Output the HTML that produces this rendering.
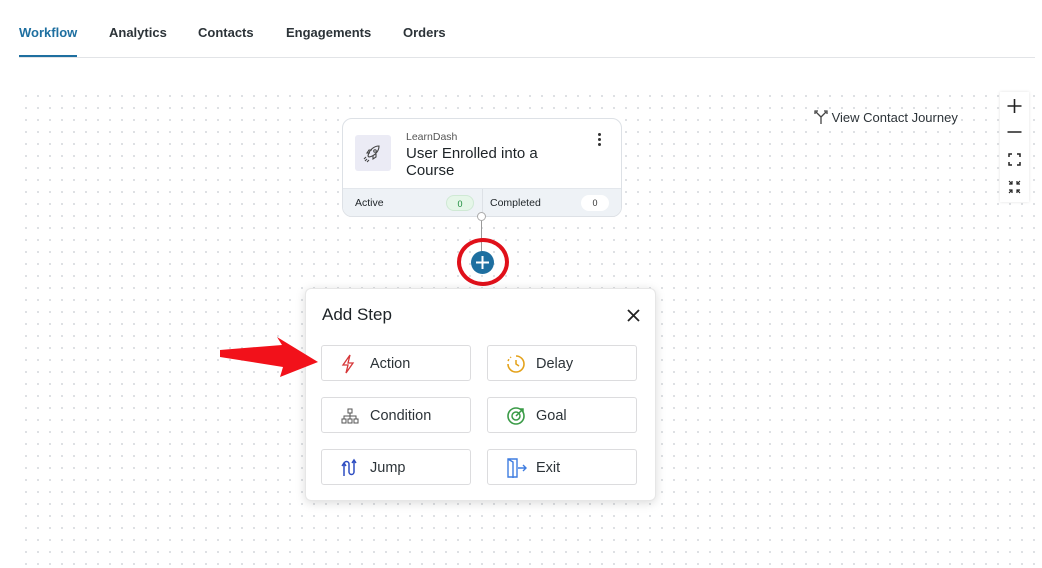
<!DOCTYPE html>
<html><head><style>
*{margin:0;padding:0;box-sizing:border-box}
body{width:1042px;height:568px;background:#fff;font-family:"Liberation Sans",sans-serif;position:relative;overflow:hidden;color:#1d2327}
.tabs{position:absolute;left:19px;top:0;width:1016px;height:58px;border-bottom:1px solid #e2e4e7}
.tab{position:absolute;top:25px;font-size:13px;font-weight:bold;color:#2c3338}
.grid{position:absolute;left:20px;top:90px;width:1015px;height:478px;background-image:radial-gradient(circle,#d5d8dc 0.8px,transparent 1.1px);background-size:12px 12px}
.card{position:absolute;left:342px;top:118px;width:280px;height:99px;border:1px solid #dde1e6;border-radius:10px;background:#fff;overflow:hidden}
.foot{position:absolute;left:0;bottom:0;width:100%;height:28px;background:#eef2f6;border-top:1px solid #e3e7ec;font-size:10.5px}
.pill{position:absolute;top:6px;width:28px;height:16px;border-radius:8px;font-size:9px;text-align:center;line-height:16px}
.pop{position:absolute;left:305px;top:288px;width:351px;height:213px;background:#fff;border-radius:6px;box-shadow:0 2px 10px rgba(0,0,0,.15);border:1px solid #e6e6e6}
.btn{position:absolute;width:150px;height:36px;border:1px solid #dcdcde;border-radius:3px;font-size:14.5px;color:#2c3338}
.btn svg{position:absolute;left:18px;top:8px}
.btn span{position:absolute;left:48px;top:10px}
</style></head><body>
<div class="tabs">
<div class="tab" style="left:0;color:#1e6fa0">Workflow</div>
<div style="position:absolute;left:0;top:55px;width:58px;height:2px;background:#1e6fa0"></div>
<div class="tab" style="left:90px">Analytics</div>
<div class="tab" style="left:179px">Contacts</div>
<div class="tab" style="left:267px">Engagements</div>
<div class="tab" style="left:384px">Orders</div>
</div>
<div class="grid"></div>
<div style="position:absolute;left:814px;top:109px;font-size:13px;color:#2c3338;background:#fff">
<svg width="14" height="16" viewBox="0 0 14 16" style="vertical-align:-3px"><path d="M7 15V8M7 8L2 3M7 8L12 3M1 5V2h3M10 2h3v3" stroke="#444" stroke-width="1.3" fill="none"/></svg> View Contact Journey</div>
<div style="position:absolute;left:1000px;top:92px;width:29px;height:110px;background:#fff;box-shadow:0 0 3px rgba(0,0,0,.12)">
<svg width="29" height="110" viewBox="0 0 29 110"><path d="M14.5 7v14M7.5 14h14M7.5 40h14" stroke="#222" stroke-width="1.6"/><path d="M9 65v-3h3M17 62h3v3M20 70v3h-3M12 73H9v-3" stroke="#222" stroke-width="1.5" fill="none"/><path d="M9 89l3 3M12 89v3H9M20 89l-3 3M17 89v3h3M9 101l3-3M9 98h3v3M20 101l-3-3M17 101v-3h3" stroke="#222" stroke-width="1.2" fill="none"/></svg></div>
<div class="card">
<div style="position:absolute;left:12px;top:16px;width:36px;height:36px;background:#ebebf5;border-radius:3px">
<svg width="36" height="36" viewBox="0 0 36 36"><path d="M13 21c1-6 6-10 11-10-0 5-4 10-10 11zM17 15l-3 0-2 3 3 0M21 19v3l-3 2 0-3M12 24l-2 2M14 25l-2 2M11 22l-2 2" stroke="#444" stroke-width="1.1" fill="none"/><circle cx="20" cy="16" r="1.3" stroke="#444" fill="none"/></svg></div>
<div style="position:absolute;left:63px;top:12px;font-size:10.5px;color:#555">LearnDash</div>
<div style="position:absolute;left:63px;top:26px;font-size:15px;line-height:17px;color:#1d2327">User Enrolled into a<br>Course</div>
<div style="position:absolute;left:255px;top:14px;width:3px"><div style="width:3px;height:3px;background:#333;border-radius:50%;margin-bottom:2px"></div><div style="width:3px;height:3px;background:#333;border-radius:50%;margin-bottom:2px"></div><div style="width:3px;height:3px;background:#333;border-radius:50%"></div></div>
<div class="foot">
<div style="position:absolute;left:12px;top:8px">Active</div>
<div class="pill" style="left:103px;background:#e5f6e8;color:#1a8b3a;border:1px solid #cfe9d4">0</div>
<div style="position:absolute;left:139px;top:0;width:1px;height:28px;background:#dde1e6"></div>
<div style="position:absolute;left:147px;top:8px">Completed</div>
<div class="pill" style="left:238px;background:#fff;color:#333">0</div>
</div></div>
<div style="position:absolute;left:481px;top:215px;width:1px;height:58px;background:#999"></div>
<div style="position:absolute;left:477px;top:212px;width:9px;height:9px;border:1px solid #aaa;border-radius:50%;background:#fff"></div>
<div style="position:absolute;left:457px;top:238px;width:52px;height:48px;border:4px solid #e0101a;border-radius:50%"></div>
<div style="position:absolute;left:471px;top:251px;width:23px;height:23px;background:#1e6fa0;border-radius:50%"><svg width="23" height="23"><path d="M11.5 5v13M5 11.5h13" stroke="#fff" stroke-width="2"/></svg></div>
<div class="pop">
<div style="position:absolute;left:16px;top:16px;font-size:17px;color:#1d2327">Add Step</div>
<svg style="position:absolute;left:321px;top:20px" width="13" height="13"><path d="M1 1l11 11M12 1L1 12" stroke="#222" stroke-width="1.8"/></svg>
<div class="btn" style="left:15px;top:56px"><svg width="16" height="20" viewBox="0 0 16 20"><path d="M10 1L3 11h5l-2 8 7-10H8z" stroke="#d63638" stroke-width="1.3" fill="none"/></svg><span>Action</span></div>
<div class="btn" style="left:181px;top:56px"><svg width="20" height="20"><path d="M10 2a8 8 0 1 1-8 8" stroke="#e4a21b" stroke-width="1.6" fill="none"/><path d="M10 6v4l3 2" stroke="#e4a21b" stroke-width="1.5" fill="none"/><path d="M2 7l1-2 2-2" stroke="#e4a21b" stroke-width="1.5" stroke-dasharray="2 2" fill="none"/></svg><span>Delay</span></div>
<div class="btn" style="left:15px;top:108px"><svg width="20" height="20"><path d="M8 3h4v4H8zM2 13h4v4H2zM8 13h4v4H8zM14 13h4v4h-4zM10 7v6M4 13v-3h12v3" stroke="#555" stroke-width="1" fill="none"/></svg><span>Condition</span></div>
<div class="btn" style="left:181px;top:108px"><svg width="20" height="20"><circle cx="10" cy="10" r="8" stroke="#3a9b47" stroke-width="1.6" fill="none"/><circle cx="10" cy="10" r="4" stroke="#3a9b47" stroke-width="1.5" fill="none"/><path d="M10 10l7-7M14 3h3v3" stroke="#3a9b47" stroke-width="1.5" fill="none"/></svg><span>Goal</span></div>
<div class="btn" style="left:15px;top:160px"><svg width="20" height="20"><path d="M4 18V6a2.5 2.5 0 0 1 5 0v8a2.5 2.5 0 0 0 5 0V2M2 8l2-3 2 3M12 5l2-3 2 3" stroke="#2f4ec2" stroke-width="1.5" fill="none"/></svg><span>Jump</span></div>
<div class="btn" style="left:181px;top:160px"><svg width="22" height="20"><path d="M2 1h9v18H2zM2 1l5 3v16" stroke="#3f7de0" stroke-width="1.4" fill="none"/><path d="M12 10h8M17 7l3 3-3 3" stroke="#3f7de0" stroke-width="1.4" fill="none"/></svg><span>Exit</span></div>
</div>
<svg style="position:absolute;left:0;top:0" width="1042" height="568"><polygon points="220,350 282,345 277,337 318,362 280,377 283,367 220,357" fill="#f2111a"/></svg>
</body></html>
